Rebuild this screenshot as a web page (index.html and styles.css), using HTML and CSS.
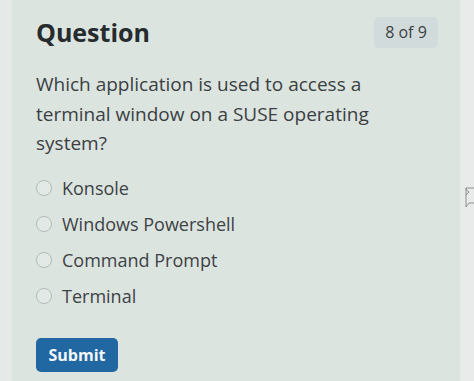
FILE: index.html
```html
<!DOCTYPE html>
<html lang="en">
<head>
	<meta charset="UTF-8">
	<title>Question 8 of 9</title>
	<link rel="stylesheet" href="styles.css">
</head>
<body>
	<div class="screen">
		<div class="edge-left"></div>
		<div class="panel">
			<div class="head">
				<h1 class="title">Question</h1>
				<span class="count">8 of 9</span>
			</div>
			<p class="question">Which application is used to access a terminal window on a SUSE operating system?</p>
			<ul class="options">
				<li><span class="radio"></span>Konsole</li>
				<li><span class="radio"></span>Windows Powershell</li>
				<li><span class="radio"></span>Command Prompt</li>
				<li><span class="radio"></span>Terminal</li>
			</ul>
			<button class="submit" type="button">Submit</button>
		</div>
		<div class="edge-right">
			<!-- mouse cursor peeking in from the right -->
			<svg class="cursor" width="10" height="22" viewBox="0 0 10 22">
				<polyline points="10,1 2,1 2,2.5 5,5 2,8" fill="none" stroke="#8a8f8d" stroke-width="1"/>
				<polyline points="2,1 2,20 5,16 10,16" fill="none" stroke="#8a8f8d" stroke-width="1"/>
			</svg>
		</div>
	</div>
</body>
</html>
```

FILE: styles.css
```css
html, body{
	margin:0;
	padding:0;
}
body{
	width:474px;
	height:381px;
	overflow:hidden;
	font-family:"Open Sans", "Noto Sans", sans-serif;
	background:#e6e9e8;
}
.screen{
	display:flex;
	height:381px;
}
.edge-left{
	width:12px;
	background:#e5e9e7;
}
.edge-right{
	width:14px;
	background:#e9ebea;
	position:relative;
}
.cursor{
	position:absolute;
	left:4px;
	top:187px;
}
.panel{
	flex:1;
	background:#dce4e0;
	padding:17px 24px 0 24px;
}
.head{
	display:flex;
	align-items:center;
	justify-content:space-between;
	height:31px;
}
.title{
	margin:0;
	font-size:25px;
	line-height:31px;
	font-weight:700;
	color:#262b2e;
}
.count{
	display:inline-block;
	margin-right:-2px;
	width:64px;
	height:31px;
	line-height:31px;
	text-align:center;
	border-radius:5px;
	background:#d2dbdc;
	font-size:16px;
	color:#3a3f42;
}
.question{
	margin:22px 0 0 0;
	max-width:350px;
	font-size:19px;
	line-height:29.5px;
	color:#3b3f42;
}
.options{
	list-style:none;
	margin:11px 0 0 0;
	padding:0;
}
.options li{
	display:flex;
	align-items:center;
	height:36px;
	font-size:18px;
	color:#3d4245;
}
.radio{
	flex:none;
	width:14px;
	height:14px;
	margin:0 10px 0 0;
	border:1.5px solid #b3b9b6;
	border-radius:50%;
	background:#e3e9e6;
}
.submit{
	display:block;
	margin-top:24px;
	width:82px;
	height:34px;
	padding:0;
	border:none;
	border-radius:5px;
	background:#2167a1;
	color:#f4f7f9;
	font-family:"Open Sans", "Noto Sans", sans-serif;
	font-size:16px;
	font-weight:700;
}
```
